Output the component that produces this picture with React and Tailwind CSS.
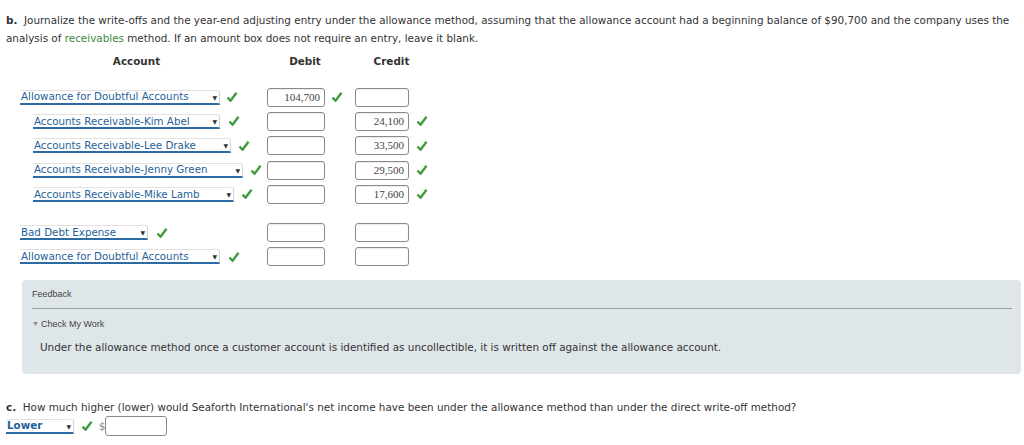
const Check = ({ className = '' }) => (
    <svg viewBox="0 0 12 12" className={'h-[12px] w-[12px] ' + className}>
        <path d="M1.5 6.5 L4.5 9.8 L10.5 1.8" fill="none" stroke="#3f9b3f" strokeWidth="2.4" strokeLinejoin="round" />
    </svg>
);

const Select = ({ label, width, bold = false }) => (
    <div
        className={
            'relative flex h-[15px] items-center rounded-tr-[3px] border-r border-t border-r-[#d4d4d4] border-t-[#e2e2e2] border-b-2 border-b-[#2d6ca2] bg-white pl-[1px] text-[10.3px] leading-none text-[#1f5f99] ' +
            (bold ? 'font-bold' : '')
        }
        style={{ width }}
    >
        <span>{label}</span>
        <span className="absolute right-[2px] top-[4px] text-[6px] text-[#333]">▼</span>
    </div>
);

const Amount = ({ value, width }) => (
    <div
        className="flex h-[19px] items-center justify-end rounded-[3px] border border-[#8a8a8a] bg-white pr-[4px] font-['Liberation_Serif',serif] text-[11px] text-[#444] shadow-[inset_0_1px_1px_rgba(0,0,0,0.08)]"
        style={{ width }}
    >
        {value}
    </div>
);

const rows = [
    { label: 'Allowance for Doubtful Accounts', indent: 14, w: 200, debit: '104,700', credit: '', gap: 6 },
    { label: 'Accounts Receivable-Kim Abel', indent: 27, w: 187, debit: '', credit: '24,100', gap: 8 },
    { label: 'Accounts Receivable-Lee Drake', indent: 27, w: 198, debit: '', credit: '33,500', gap: 7 },
    { label: 'Accounts Receivable-Jenny Green', indent: 27, w: 210, debit: '', credit: '29,500', gap: 7 },
    { label: 'Accounts Receivable-Mike Lamb', indent: 27, w: 201, debit: '', credit: '17,600', gap: 7 },
];

const rows2 = [
    { label: 'Bad Debt Expense', indent: 14, w: 128, gap: 8 },
    { label: 'Allowance for Doubtful Accounts', indent: 14, w: 200, gap: 8 },
];

const Row = ({ row, checks }) => (
    <div className="flex h-[24.3px] items-center">
        <div className="flex w-[261px] items-center" style={{ paddingLeft: row.indent }}>
            <Select label={row.label} width={row.w} />
            <span style={{ width: row.gap }} />
            {checks && <Check />}
        </div>
        <Amount value={row.debit} width={58} />
        <div className="flex w-[30px] items-center pl-[6px]">
            {checks && row.debit && <Check />}
        </div>
        <Amount value={row.credit} width={54} />
        <div className="flex items-center pl-[7px]">
            {checks && row.credit && <Check />}
        </div>
    </div>
);

export default function App() {
    return (
        <div className="h-[445px] w-[1024px] overflow-hidden bg-white px-[6px] font-['DejaVu_Sans',Verdana,sans-serif] text-[#333]">
            <p className="pt-[11px] text-[10.4px] leading-[18px]">
                <b>b.</b>&nbsp; Journalize the write-offs and the year-end adjusting entry under the allowance method, assuming that the allowance account had a beginning balance of $90,700 and the company uses the analysis of <span className="text-[#3d8a3d]">receivables</span> method. If an amount box does not require an entry, leave it blank.
            </p>

            <div className="mt-[7px] flex h-[16px] items-center text-[10.4px] font-bold">
                <div className="w-[261px] text-center">Account</div>
                <div className="w-[76px] text-center">Debit</div>
                <div className="w-[12px]" />
                <div className="w-[73px] text-center">Credit</div>
            </div>

            <div className="mt-[15px]">
                {rows.map((r) => (
                    <Row key={r.label} row={r} checks />
                ))}
            </div>
            <div className="mt-[14px]">
                {rows2.map((r) => (
                    <Row key={r.label} row={{ ...r, debit: '', credit: '' }} checks />
                ))}
            </div>

            <div className="ml-[16px] mt-[11px] h-[94px] w-[999px] rounded-[4px] bg-[#dfe6e9] px-[10px] pt-[8px]">
                <div className="font-['Liberation_Sans',Arial,sans-serif] text-[9px] text-[#444]">Feedback</div>
                <div className="mt-[6px] h-px w-[980px] bg-[#9aa0a3]" />
                <div className="mt-[9px] flex items-center font-['Liberation_Sans',Arial,sans-serif] text-[9px] text-[#444]">
                    <span className="mr-[2px] text-[7px] text-[#888]">▼</span>Check My Work
                </div>
                <div className="mt-[9px] pl-[8px] text-[10.4px] text-[#333]">
                    Under the allowance method once a customer account is identified as uncollectible, it is written off against the allowance account.
                </div>
            </div>

            <p className="mt-[24px] text-[10.4px] leading-[18px]">
                <b>c.</b>&nbsp; How much higher (lower) would Seaforth International's net income have been under the allowance method than under the direct write-off method?
            </p>
            <div className="flex items-center">
                <Select label="Lower" width={68} bold />
                <span className="w-[7px]" />
                <Check />
                <span className="ml-[6px] text-[10px] text-[#888]">$</span>
                <div className="h-[20px] w-[62px] rounded-[3px] border border-[#8a8a8a] bg-white" />
            </div>
        </div>
    );
}
